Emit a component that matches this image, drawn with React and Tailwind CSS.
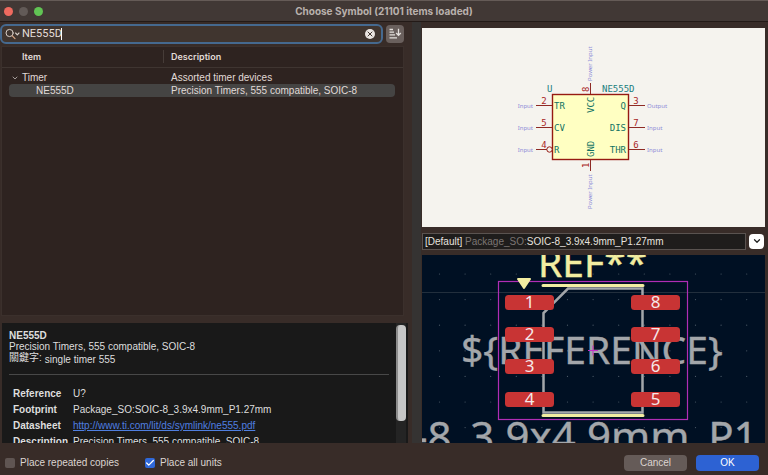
import { useState } from "react";
import { FiChevronDown, FiCheck, FiX } from "react-icons/fi";

const fields = [
  { name: "Reference", value: "U?" },
  { name: "Footprint", value: "Package_SO:SOIC-8_3.9x4.9mm_P1.27mm" },
  { name: "Datasheet", value: "http://www.ti.com/lit/ds/symlink/ne555.pdf", link: true },
  { name: "Description", value: "Precision Timers, 555 compatible, SOIC-8" },
];

const leftPins = [
  { num: "2", name: "TR", type: "Input", y: 105 },
  { num: "5", name: "CV", type: "Input", y: 127 },
  { num: "4", name: "R", type: "Input", y: 149, inverted: true },
];

const rightPins = [
  { num: "3", name: "Q", type: "Output", y: 105 },
  { num: "7", name: "DIS", type: "Input", y: 127 },
  { num: "6", name: "THR", type: "Input", y: 149 },
];

const pads = [
  { num: "1", x: 505, y: 295 },
  { num: "2", x: 505, y: 327 },
  { num: "3", x: 505, y: 359 },
  { num: "4", x: 505, y: 392 },
  { num: "8", x: 631, y: 295 },
  { num: "7", x: 631, y: 327 },
  { num: "6", x: 631, y: 359 },
  { num: "5", x: 631, y: 392 },
];

const gridX = Array.from({ length: 13 }, (_, i) => 439.5 + i * 25.6);
const gridY = Array.from({ length: 7 }, (_, i) => 274 + i * 25.6);

const TitleBar = () => (
  <header className="relative flex h-[22px] shrink-0 items-center justify-center border-t border-b border-t-[#655b57] border-b-[#231a17] bg-[#413835]">
    <div className="absolute left-1 flex gap-[6px]">
      <button aria-label="Close" className="h-[9px] w-[9px] rounded-full bg-[#ee6a5f]" />
      <button aria-label="Minimize" className="h-[9px] w-[9px] rounded-full bg-[#625a57]" />
      <button aria-label="Zoom" className="h-[9px] w-[9px] rounded-full bg-[#61c454]" />
    </div>
    <h1 className="font-['Inter',sans-serif] text-[10px] leading-3 font-bold text-[#b9b1ad]">Choose Symbol (21101 items loaded)</h1>
  </header>
);

const SearchBar = ({ query, setQuery }) => (
  <div className="flex items-center gap-[3px] pr-1">
    <div className="relative flex h-5 flex-1 items-center rounded-md border-2 border-[#45698f] bg-[#40352f] pr-[6px] pl-[3px]">
      <svg viewBox="0 0 15 12" className="h-3 w-[15px] shrink-0" fill="none" strokeLinecap="round" strokeLinejoin="round">
        <circle cx="4.6" cy="5" r="3.6" stroke="#d8cfc8" />
        <path d="M7.3 7.8 L10 10.6" stroke="#d8a583" strokeWidth="1.2" />
        <path d="M10.6 5 L12.3 6.8 L14 5" stroke="#d8cfc8" strokeWidth="1.1" />
      </svg>
      <input
        aria-label="Filter symbols"
        value={query}
        onChange={(e) => setQuery(e.target.value)}
        className="w-full min-w-0 bg-transparent pl-[2px] font-['Roboto',sans-serif] text-[11px] leading-4 text-[#e4deda] outline-none"
      />
      <span className="absolute left-[59px] h-3 w-px bg-white" />
      <button aria-label="Clear" onClick={() => setQuery("")} className="flex h-[10px] w-[10px] shrink-0 items-center justify-center rounded-full bg-[#e9e4e0]">
        <FiX className="h-2 w-2 text-[#40352f]" strokeWidth={3} />
      </button>
    </div>
    <button aria-label="Sort" className="flex h-[18px] w-[18px] items-center justify-center rounded bg-[#6a605d]">
      <svg viewBox="0 0 14 14" className="h-[14px] w-[14px]" fill="none" stroke="#e4dfdc" strokeWidth="1.3">
        <path d="M1.5 2.5 H5 M1.5 5.2 H6 M1.5 7.9 H7 M1.5 10.8 H9" />
        <path d="M10.5 1.8 V8 M8.2 6 L10.5 8.4 L12.8 6" />
      </svg>
    </button>
  </div>
);

const SymbolTree = () => (
  <div className="mr-1 ml-px min-h-0 flex-1 overflow-hidden border border-[#3b302c] bg-[#2e2320]">
    <table className="w-full table-fixed border-collapse text-[10px] leading-[13px] text-[#e0dad7]">
      <colgroup>
        <col className="w-[7px]" />
        <col className="w-[154px]" />
        <col />
        <col className="w-2" />
      </colgroup>
      <thead>
        <tr className="h-5 border-b border-[#3f3531] text-left font-['Inter',sans-serif] text-[9px]">
          <td />
          <th className="py-0 pl-[13px] font-semibold">Item</th>
          <th className="py-0 font-semibold">
            <div className="border-l border-[#463c38] pl-[7px]">Description</div>
          </th>
          <td />
        </tr>
      </thead>
      <tbody>
        <tr className="h-[17px] align-bottom">
          <td />
          <td className="p-0">
            <div className="flex items-center gap-[3px] pl-[2px]">
              <FiChevronDown className="h-2 w-2" />
              Timer
            </div>
          </td>
          <td className="p-0 pl-2">Assorted timer devices</td>
          <td />
        </tr>
        <tr>
          <td />
          <td className="rounded-l bg-[#454443] p-0 pl-[27px]">NE555D</td>
          <td className="rounded-r bg-[#454443] p-0 pl-2">Precision Timers, 555 compatible, SOIC-8</td>
          <td />
        </tr>
      </tbody>
    </table>
  </div>
);

const Details = () => (
  <section className="ml-[2px] flex h-[120px] shrink-0 overflow-hidden bg-[#191919] text-[10px] leading-[11px] text-[#dedede]">
    <div className="min-w-0 flex-1 pt-[7px] pl-[7px]">
      <h2 className="font-bold">NE555D</h2>
      <p>Precision Timers, 555 compatible, SOIC-8</p>
      <p className="flex h-[13px] items-end gap-[3px]">
        <span className="self-start">關鍵字:</span>
        <span>single timer 555</span>
      </p>
      <hr className="mt-[9px] mr-[7px] border-[#484848]" />
      <table className="mt-[11px] ml-1 border-collapse leading-4">
        <tbody>
          {fields.map((f) => (
            <tr key={f.name}>
              <th className="w-[60px] p-0 text-left font-bold">{f.name}</th>
              <td className="p-0 whitespace-nowrap">
                {f.link ? <a href={f.value} className="text-[#4f7fe0] underline">{f.value}</a> : f.value}
              </td>
            </tr>
          ))}
        </tbody>
      </table>
    </div>
    <div className="mr-[2px] w-[10px] bg-[#242424] pt-[2px]">
      <div className="h-24 rounded-sm border-l-2 border-[#8c8c8c] bg-[#c6c6c6]" />
    </div>
  </section>
);

const SymbolPreview = () => (
  <svg viewBox="422 28 343 199" className="min-h-0 w-full flex-[199] bg-[#f5f3ee] font-['DejaVu_Sans_Mono',monospace] text-[9px]">
    <rect x="552.5" y="94.5" width="76" height="65" fill="#ffffc2" stroke="#961a12" strokeWidth="1.4" />
    <g fill="#1b7d7d">
      <text x="547" y="92">U</text>
      <text x="602" y="92">NE555D</text>
    </g>
    {leftPins.map((p) => (
      <g key={p.num}>
        <path d={`M536 ${p.y + 0.5} H${p.inverted ? 547 : 552}`} stroke="#8e2a24" />
        {p.inverted && <circle cx="549.5" cy={p.y + 0.5} r="2.7" fill="#f5f3ee" stroke="#961a12" />}
        <text x="544" y={p.y - 1} textAnchor="middle" fill="#a91f1f">{p.num}</text>
        <text x="554" y={p.y + 4} fill="#127263">{p.name}</text>
        <text x="533" y={p.y + 3} textAnchor="end" fill="#8f8dd8" className="font-['Noto_Sans',sans-serif] text-[6px]">{p.type}</text>
      </g>
    ))}
    {rightPins.map((p) => (
      <g key={p.num}>
        <path d={`M629 ${p.y + 0.5} H645`} stroke="#8e2a24" />
        <text x="636" y={p.y - 1} textAnchor="middle" fill="#a91f1f">{p.num}</text>
        <text x="626" y={p.y + 4} textAnchor="end" fill="#127263">{p.name}</text>
        <text x="647" y={p.y + 3} fill="#8f8dd8" className="font-['Noto_Sans',sans-serif] text-[6px]">{p.type}</text>
      </g>
    ))}
    {/* power pins run vertically */}
    <path d="M590.5 83 V94 M590.5 160 V171" stroke="#8e2a24" />
    <g fill="#a91f1f">
      <text transform="translate(589 92) rotate(-90)">8</text>
      <text transform="translate(589 168) rotate(-90)">1</text>
    </g>
    <g fill="#127263">
      <text transform="translate(594 113) rotate(-90)">VCC</text>
      <text transform="translate(594 157) rotate(-90)">GND</text>
    </g>
    <g fill="#8f8dd8" className="font-['Noto_Sans',sans-serif] text-[6px]">
      <text transform="translate(592 81) rotate(-90)">Power Input</text>
      <text transform="translate(592 209) rotate(-90)">Power Input</text>
    </g>
  </svg>
);

const FootprintPreview = () => (
  <svg viewBox="422 255 343 188" preserveAspectRatio="xMidYMid slice" className="min-h-0 w-full flex-[188] bg-[#001023] font-['Noto_Sans',sans-serif]">
    {gridY.map((y) => gridX.map((x) => <circle key={`${x}-${y}`} cx={x} cy={y} r="0.6" fill="#4a5966" />))}
    <path d="M422 292.5 H765" stroke="#222f3d" />
    {/* fab layer */}
    <g fill="#a3a6aa" stroke="#a3a6aa" strokeWidth="0.4">
      <text x="461" y="364" className="text-[39px]">{"${REFERENCE}"}</text>
      <text x="414" y="452" className="text-[42px]">-8_3.9x4.9mm_P1.27mm</text>
    </g>
    <path d="M568 288.5 H642.5 V412.5 H543.5 V313 Z" fill="none" stroke="#a3a6aa" strokeWidth="2.5" />
    {/* silkscreen */}
    <text x="538" y="277" fill="#f2eda1" stroke="#f2eda1" strokeWidth="0.4" className="text-[39px]">REF**</text>
    <path d="M543 285.5 H643 M543 415.5 H643" stroke="#f2eda1" strokeWidth="3" strokeLinecap="round" />
    <rect x="498.5" y="281.5" width="189" height="138" fill="none" stroke="#b02db5" strokeWidth="1.2" />
    <path d="M518 279 H530 L524 288 Z" fill="#f2eda1" stroke="#f2eda1" strokeWidth="2" strokeLinejoin="round" />
    {pads.map((p) => (
      <g key={p.num}>
        <rect x={p.x} y={p.y} width="49" height="15" rx="3.5" fill="#c83434" />
        <text x={p.x + 24.5} y={p.y + 13} textAnchor="middle" fill="#f6e9e9" className="text-[17px]">{p.num}</text>
      </g>
    ))}
    <path d="M588 350.5 H598 M593 345.5 V355.5" stroke="#c12fc6" />
  </svg>
);

const FootprintSelect = () => (
  <div className="relative my-[5px] flex h-[18px] shrink-0 items-center gap-[3px] text-[10px]">
    <div className="flex h-[17px] min-w-0 flex-1 items-center border border-[#5a5350] bg-[#1f1d1c] px-[2px] whitespace-nowrap text-[#e6e2df]">
      [Default]&nbsp;<span className="text-[#7b7573]">Package_SO:</span>SOIC-8_3.9x4.9mm_P1.27mm
    </div>
    <span className="mr-px flex h-[15px] w-[15px] items-center justify-center rounded bg-white">
      <FiChevronDown className="h-[10px] w-[10px] text-[#222]" strokeWidth={3} />
    </span>
    <select aria-label="Footprint" className="absolute inset-0 w-full opacity-0">
      <option>[Default] Package_SO:SOIC-8_3.9x4.9mm_P1.27mm</option>
    </select>
  </div>
);

const Checkbox = ({ label, checked, onChange }) => (
  <label className="flex items-center gap-[5px]">
    <span className="relative flex h-[10px] w-[10px]">
      <input
        type="checkbox"
        checked={checked}
        onChange={(e) => onChange(e.target.checked)}
        className="h-[10px] w-[10px] appearance-none rounded-xs bg-[#5f5552] checked:bg-[#2f68d8]"
      />
      {checked && <FiCheck className="pointer-events-none absolute inset-0 h-[10px] w-[10px] text-white" strokeWidth={3} />}
    </span>
    {label}
  </label>
);

const App = () => {
  const [query, setQuery] = useState("NE555D");
  const [repeat, setRepeat] = useState(false);
  const [allUnits, setAllUnits] = useState(true);

  return (
    <div className="flex h-screen flex-col overflow-hidden bg-[#382c28] font-['Liberation_Sans','Noto_Sans_CJK_TC',sans-serif]">
      <TitleBar />
      <main className="grid min-h-0 flex-1 grid-cols-[412fr_9px_347fr]">
        <div className="flex min-h-0 min-w-0 flex-col pt-[2px] pr-1">
          <SearchBar query={query} setQuery={setQuery} />
          <div className="mt-[2px] mb-[7px] flex min-h-0 flex-1">
            <SymbolTree />
          </div>
          <Details />
        </div>
        <div className="bg-[#353332]" />
        <div className="flex min-h-0 min-w-0 flex-col pt-[6px] pr-[3px] pl-px">
          <SymbolPreview />
          <FootprintSelect />
          <FootprintPreview />
        </div>
      </main>

      {/* footer */}
      <footer className="flex h-8 shrink-0 items-center gap-[26px] pt-2 pr-[9px] pl-[5px] text-[10px] leading-3 text-[#dcd5d1]">
        <Checkbox label="Place repeated copies" checked={repeat} onChange={setRepeat} />
        <Checkbox label="Place all units" checked={allUnits} onChange={setAllUnits} />
        <div className="ml-auto flex gap-[9px]">
          <button className="h-4 w-[63px] rounded bg-[#655b58]">Cancel</button>
          <button className="h-4 w-[63px] rounded bg-[#2d62d3] text-white">OK</button>
        </div>
      </footer>
    </div>
  );
};

export default App;
